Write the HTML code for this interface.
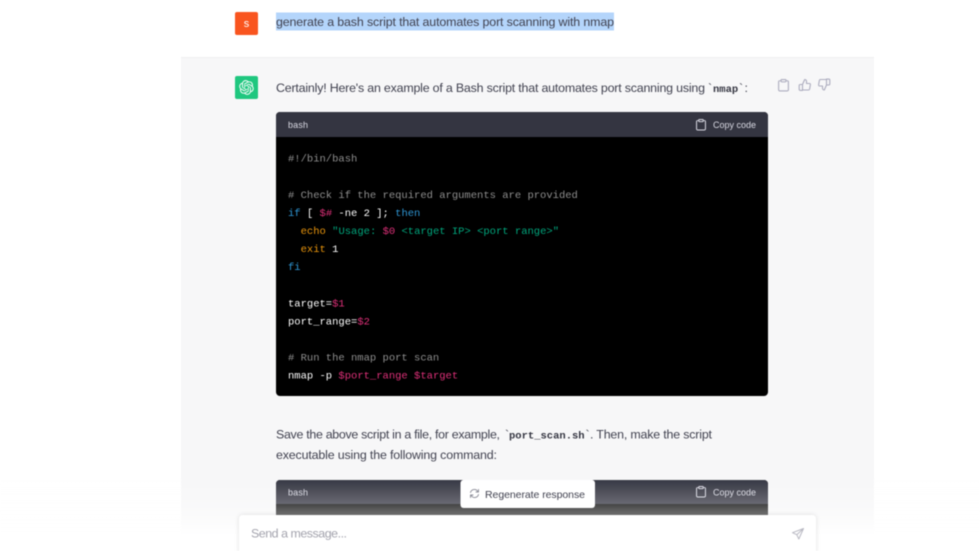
<!DOCTYPE html>
<html><head><meta charset="utf-8"><style>
html,body{margin:0;padding:0;background:#fff;width:980px;height:551px;overflow:hidden}
svg{display:block}
#root{filter:blur(.5px)}
text{font-family:"Liberation Sans",sans-serif;white-space:pre}
.m{font-family:"Liberation Mono",monospace;font-size:10.5px}
.b{font-weight:bold;fill:#343541}
.t{font-size:12.4px;fill:#40414f}
.h{font-size:9px;fill:#d9d9e3}
.i{fill:none;stroke-linecap:round;stroke-linejoin:round}
</style></head><body>
<svg id="root" width="980" height="551" viewBox="0 0 980 551" xmlns="http://www.w3.org/2000/svg">
<defs>
<linearGradient id="fade" x1="0" y1="0" x2="0" y2="1">
<stop offset="0" stop-color="#fff" stop-opacity="0"/>
<stop offset=".44" stop-color="#fff" stop-opacity=".25"/>
<stop offset=".68" stop-color="#fff" stop-opacity=".48"/>
<stop offset="1" stop-color="#fff" stop-opacity="1"/>
</linearGradient>
<filter id="sh" x="-5%" y="-30%" width="110%" height="160%"><feDropShadow dx="0" dy="0" stdDeviation="2.5" flood-color="#000" flood-opacity=".12"/></filter>
<symbol id="clip" viewBox="3 1 18 22" preserveAspectRatio="none"><path class="i" stroke="currentColor" stroke-width="1.8" d="M16 4h2a2 2 0 0 1 2 2v14a2 2 0 0 1-2 2H6a2 2 0 0 1-2-2V6a2 2 0 0 1 2-2h2"/><rect class="i" stroke="currentColor" stroke-width="1.8" x="8" y="2" width="8" height="4" rx="1"/></symbol>
</defs>

<rect x="181" y="57" width="693" height="494" fill="#f7f7f8"/>
<rect x="181" y="57" width="693" height="1" fill="#efeff0"/>

<!-- user row -->
<rect x="235" y="12" width="23" height="23" rx="2" fill="#f9551f"/>
<text x="246.500" y="27" text-anchor="middle" font-size="11" fill="#fff">s</text>
<rect x="276" y="12.500" width="338" height="18" fill="#b4d5fb"/>
<text class="t" x="276" y="26" textLength="338" lengthAdjust="spacing">generate a bash script that automates port scanning with nmap</text>

<!-- assistant avatar -->
<rect x="235" y="76" width="23" height="23" rx="2" fill="#1fc77f"/>
<svg x="239" y="80" width="15" height="15" viewBox="0 0 41 41"><path fill="#fff" d="M37.5324 16.8707C37.9808 15.5241 38.1363 14.0974 37.9886 12.6859C37.8409 11.2744 37.3934 9.91076 36.676 8.68622C35.6126 6.83404 33.9882 5.3676 32.0373 4.4985C30.0864 3.62941 27.9098 3.40259 25.8215 3.85078C24.8796 2.7893 23.7219 1.94125 22.4257 1.36341C21.1295 0.785575 19.7249 0.491269 18.3058 0.500197C16.1708 0.495044 14.0893 1.16803 12.3614 2.42214C10.6335 3.67624 9.34853 5.44666 8.6917 7.47815C7.30085 7.76286 5.98686 8.3414 4.8377 9.17505C3.68854 10.0087 2.73073 11.0782 2.02839 12.312C0.956464 14.1591 0.498905 16.2988 0.721698 18.4228C0.944492 20.5467 1.83612 22.5449 3.268 24.1293C2.81966 25.4759 2.66413 26.9026 2.81182 28.3141C2.95951 29.7256 3.40701 31.0892 4.12437 32.3138C5.18791 34.1659 6.8123 35.6322 8.76321 36.5013C10.7141 37.3704 12.8907 37.5973 14.9789 37.1492C15.9208 38.2107 17.0786 39.0587 18.3747 39.6366C19.6709 40.2144 21.0755 40.5087 22.4946 40.4998C24.6307 40.5054 26.7133 39.8321 28.4418 38.5772C30.1704 37.3223 31.4556 35.5506 32.1119 33.5179C33.5027 33.2332 34.8167 32.6547 35.9659 31.821C37.115 30.9874 38.0728 29.9178 38.7752 28.684C39.8458 26.8371 40.3023 24.6979 40.0789 22.5748C39.8556 20.4517 38.9639 18.4544 37.5324 16.8707ZM22.4978 37.8849C20.7443 37.8874 19.0459 37.2733 17.6994 36.1501C17.7601 36.117 17.8666 36.0586 17.936 36.0161L25.9004 31.4156C26.1003 31.3019 26.2663 31.137 26.3813 30.9378C26.4964 30.7386 26.5563 30.5124 26.5549 30.2825V19.0542L29.9213 20.998C29.9389 21.0068 29.9541 21.0198 29.9656 21.0359C29.977 21.052 29.9842 21.0707 29.9867 21.0902V30.3889C29.9842 32.375 29.1946 34.2791 27.7909 35.6841C26.3872 37.0892 24.4838 37.8806 22.4978 37.8849ZM6.39227 31.0064C5.51397 29.4888 5.19742 27.7107 5.49804 25.9832C5.55718 26.0187 5.66048 26.0818 5.73461 26.1244L13.699 30.7248C13.8975 30.8408 14.1233 30.902 14.3532 30.902C14.583 30.902 14.8088 30.8408 15.0073 30.7248L24.731 25.1103V28.9979C24.7321 29.0177 24.7283 29.0376 24.7199 29.0556C24.7115 29.0736 24.6988 29.0893 24.6829 29.1012L16.6317 33.7497C14.9096 34.7416 12.8643 35.0097 10.9447 34.4954C9.02506 33.9811 7.38785 32.7263 6.39227 31.0064ZM4.29707 13.6194C5.17156 12.0998 6.55279 10.9364 8.19885 10.3327C8.19885 10.4013 8.19491 10.5228 8.19491 10.6071V19.808C8.19351 20.0378 8.25334 20.2638 8.36823 20.4629C8.48312 20.6619 8.64893 20.8267 8.84863 20.9404L18.5723 26.5542L15.206 28.4979C15.1894 28.5089 15.1703 28.5155 15.1505 28.5173C15.1307 28.5191 15.1107 28.516 15.0924 28.5082L7.04046 23.8557C5.32135 22.8601 4.06716 21.2235 3.55289 19.3046C3.03862 17.3858 3.30624 15.3413 4.29707 13.6194ZM31.955 20.0556L22.2312 14.4411L25.5976 12.4981C25.6142 12.4872 25.6333 12.4805 25.6531 12.4787C25.6729 12.4769 25.6928 12.4801 25.7111 12.4879L33.7631 17.1364C34.9967 17.849 36.0017 18.8982 36.6606 20.1613C37.3194 21.4244 37.6047 22.849 37.4832 24.2684C37.3617 25.6878 36.8382 27.0432 35.9743 28.1759C35.1103 29.3086 33.9415 30.1717 32.6047 30.6641C32.6047 30.5947 32.6047 30.4733 32.6047 30.3889V21.188C32.6066 20.9586 32.5474 20.7328 32.4332 20.5338C32.319 20.3348 32.154 20.1698 31.955 20.0556ZM35.3055 15.0128C35.2464 14.9765 35.1431 14.9142 35.069 14.8717L27.1045 10.2712C26.906 10.1554 26.6803 10.0943 26.4504 10.0943C26.2206 10.0943 25.9948 10.1554 25.7963 10.2712L16.0726 15.8858V11.9982C16.0715 11.9783 16.0753 11.9585 16.0837 11.9405C16.0921 11.9225 16.1048 11.9068 16.1207 11.8949L24.1719 7.25025C25.4053 6.53903 26.8158 6.19376 28.2383 6.25482C29.6608 6.31589 31.0364 6.78077 32.2044 7.59508C33.3723 8.40939 34.2842 9.53945 34.8334 10.8531C35.3826 12.1667 35.5464 13.6095 35.3055 15.0128ZM14.2424 21.9419L10.8752 19.9981C10.8576 19.9893 10.8423 19.9763 10.8309 19.9602C10.8195 19.9441 10.8122 19.9254 10.8098 19.9058V10.6071C10.8107 9.18295 11.2173 7.78848 11.9819 6.58696C12.7466 5.38544 13.8377 4.42659 15.1275 3.82264C16.4173 3.21869 17.8524 2.99464 19.2649 3.1767C20.6775 3.35876 22.0089 3.93941 23.1034 4.85067C23.0427 4.88379 22.937 4.94215 22.8668 4.98473L14.9024 9.58517C14.7025 9.69878 14.5366 9.86356 14.4215 10.0626C14.3065 10.2616 14.2466 10.4877 14.2479 10.7175L14.2424 21.9419ZM16.071 17.9991L20.4018 15.4978L24.7325 17.9975V22.9985L20.4018 25.4983L16.071 22.9985V17.9991Z"/></svg>

<!-- assistant text -->
<text class="t" x="276" y="92" textLength="429" lengthAdjust="spacing">Certainly! Here's an example of a Bash script that automates port scanning using</text>
<text class="t" x="708" y="92">`</text>
<text class="m b" x="713" y="92">nmap</text>
<text class="t" x="739" y="92">`</text>
<text class="t" x="744.500" y="92">:</text>

<!-- action icons -->
<g color="#acacbe">
<use href="#clip" x="778" y="79" width="11" height="12.500"/>
<g class="i" stroke="#acacbe" stroke-width="1.100"><path d="M802.500 84.500l2.200-5c1 0 1.800.8 1.800 1.800v2.200h3c.6 0 1 .5.9 1.100l-.8 4.600c-.1.5-.5.8-1 .8h-6.100zM802.500 84.500h-2.200c-.6 0-1.100.5-1.100 1.100v3.700c0 .6.5 1.100 1.100 1.100h2.200"/>
<path d="M826.500 85.500l-2.200 5c-1 0-1.800-.8-1.800-1.800v-2.200h-3c-.6 0-1-.5-.9-1.100l.8-4.600c.1-.5.5-.8 1-.8h6.100zM826.500 85.500h2.200c.6 0 1.100-.5 1.100-1.100v-3.700c0-.6-.5-1.100-1.100-1.100h-2.200" transform="translate(0 -.5)"/></g>
</g>

<!-- code block 1 -->
<rect x="276" y="112" width="492" height="284" rx="4" fill="#000"/>
<path d="M276 137v-21a4 4 0 0 1 4-4h484a4 4 0 0 1 4 4v21z" fill="#343541"/>
<text class="h" x="288" y="128" textLength="20" lengthAdjust="spacing">bash</text>
<use href="#clip" x="696" y="119" width="10" height="11.500" color="#d9d9e3"/>
<text class="h" x="713" y="128" textLength="43" lengthAdjust="spacing">Copy code</text>

<text class="m" x="288" y="161.700" fill="#8e8e8e">#!/bin/bash</text>
<text class="m" x="288" y="197.800" fill="#8e8e8e"># Check if the required arguments are provided</text>
<text class="m" x="288" y="215.900" fill="#fff"><tspan fill="#2e95d3">if</tspan> [ <tspan fill="#df3079">$#</tspan> -ne 2 ]; <tspan fill="#2e95d3">then</tspan></text>
<text class="m" x="288" y="234" fill="#fff">  <tspan fill="#e9950c">echo</tspan> <tspan fill="#00a67d">"Usage: </tspan><tspan fill="#df3079">$0</tspan><tspan fill="#00a67d"> &lt;target IP&gt; &lt;port range&gt;"</tspan></text>
<text class="m" x="288" y="252" fill="#fff">  <tspan fill="#e9950c">exit</tspan> 1</text>
<text class="m" x="288" y="270" fill="#2e95d3">fi</text>
<text class="m" x="288" y="306.300" fill="#fff">target=<tspan fill="#df3079">$1</tspan></text>
<text class="m" x="288" y="324.400" fill="#fff">port_range=<tspan fill="#df3079">$2</tspan></text>
<text class="m" x="288" y="360.500" fill="#8e8e8e"># Run the nmap port scan</text>
<text class="m" x="288" y="378.500" fill="#fff">nmap -p <tspan fill="#df3079">$port_range</tspan> <tspan fill="#df3079">$target</tspan></text>

<!-- paragraph -->
<text class="t" x="276" y="438.500" textLength="224" lengthAdjust="spacing">Save the above script in a file, for example,</text>
<text class="t" x="505" y="438.500">`</text>
<text class="m b" x="509" y="438.500">port_scan.sh</text>
<text class="t" x="585.500" y="438.500">`</text>
<text class="t" x="590" y="438.500" textLength="122" lengthAdjust="spacing">. Then, make the script</text>
<text class="t" x="276" y="459" textLength="221" lengthAdjust="spacing">executable using the following command:</text>

<!-- code block 2 -->
<path d="M276 551V484a4 4 0 0 1 4-4h484a4 4 0 0 1 4 4v67z" fill="#000"/>
<path d="M276 504V484a4 4 0 0 1 4-4h484a4 4 0 0 1 4 4v20z" fill="#343541"/>
<text class="h" x="288" y="495.500" textLength="20" lengthAdjust="spacing">bash</text>
<use href="#clip" x="696" y="486" width="10" height="11.500" color="#d9d9e3"/>
<text class="h" x="713" y="495.500" textLength="43" lengthAdjust="spacing">Copy code</text>

<!-- bottom fade -->
<rect x="0" y="478" width="980" height="57" fill="url(#fade)"/>
<rect x="0" y="535" width="980" height="16" fill="#fff"/>

<!-- regenerate -->
<rect x="460.500" y="480" width="134.500" height="28" rx="3" fill="#fff"/>
<g class="i" stroke="#8a8b96" stroke-width=".9"><path d="M470.500 493a4 4 0 0 1 7-1.500l1 1M478.500 490v2.500h-2.500M478.500 495a4 4 0 0 1-7 1.500l-1-1M470.500 498v-2.500h2.500" transform="translate(0 -.5)"/></g>
<text x="485" y="498" font-size="10.500" fill="#40414f" textLength="100" lengthAdjust="spacing">Regenerate response</text>

<!-- input -->
<rect x="239" y="515" width="577" height="40" rx="4" fill="#fff" filter="url(#sh)"/>
<text x="251" y="537.500" font-size="12.400" fill="#a3a3ad" textLength="96" lengthAdjust="spacing">Send a message...</text>
<g class="i" stroke="#b9b9c3" stroke-width="1"><path d="M803.500 528.500l-11 4.200 4.300 2 2 4.300zM803.500 528.500l-6.700 6.200"/></g>
</svg>
</body></html>
